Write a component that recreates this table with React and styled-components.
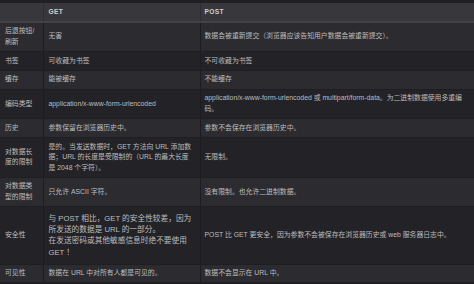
import styled, { createGlobalStyle } from "styled-components";

const GlobalStyle = createGlobalStyle`
  html, body {
    margin: 0;
    padding: 0;
    background: #202024;
  }
  body {
    font-family: "Liberation Sans", "Noto Sans CJK SC", sans-serif;
  }
`;

const Page = styled.div`
  padding-top: 3px;
  width: 474px;
  height: 284px;
  overflow: hidden;
`;

const Table = styled.table`
  width: 474px;
  border-collapse: collapse;
  table-layout: fixed;
  font-size: 6.85px;
  line-height: 10.5px;
  color: #bcbcbe;
`;

const HeadRow = styled.tr`
  background: #38383c;
  border-bottom: 2px solid #434347;
`;

const HeadCell = styled.th`
  text-align: left;
  font-weight: bold;
  font-size: 6.6px;
  letter-spacing: 0.4px;
  color: #cfcfd1;
  padding: 4px 5px 3px;
  border-right: 1px solid #2e2e32;
  &:last-child {
    border-right: none;
    padding-left: 4px;
  }
`;

const Row = styled.tr`
  background: ${(p) => (p.$odd ? "#2c2c30" : "#232327")};
  border-bottom: 1px solid #1f1f23;
`;

const Cell = styled.td`
  vertical-align: middle;
  padding: ${(p) => (p.$tall ? "5.6px" : "3.7px")} 5px;
  font-size: ${(p) => (p.$big ? "7.7px" : "inherit")};
  line-height: ${(p) => (p.$big ? "11.3px" : "inherit")};
  border-right: 1px solid #1d1d21;
  word-break: break-all;
  &:last-child {
    border-right: none;
    padding-left: 4px;
  }
`;

const rows = [
  ["后退按钮/刷新", "无害", "数据会被重新提交（浏览器应该告知用户数据会被重新提交）。"],
  ["书签", "可收藏为书签", "不可收藏为书签"],
  ["缓存", "能被缓存", "不能缓存"],
  [
    "编码类型",
    "application/x-www-form-urlencoded",
    "application/x-www-form-urlencoded 或 multipart/form-data。为二进制数据使用多重编码。",
  ],
  ["历史", "参数保留在浏览器历史中。", "参数不会保存在浏览器历史中。"],
  [
    "对数据长度的限制",
    "是的。当发送数据时，GET 方法向 URL 添加数据；URL 的长度是受限制的（URL 的最大长度是 2048 个字符）。",
    "无限制。",
  ],
  ["对数据类型的限制", "只允许 ASCII 字符。", "没有限制。也允许二进制数据。"],
  [
    "安全性",
    <>
      与 POST 相比，GET 的安全性较差，因为所发送的数据是 URL 的一部分。
      <br />
      在发送密码或其他敏感信息时绝不要使用 GET ！
    </>,
    "POST 比 GET 更安全，因为参数不会被保存在浏览器历史或 web 服务器日志中。",
    true,
  ],
  ["可见性", "数据在 URL 中对所有人都是可见的。", "数据不会显示在 URL 中。"],
];

export default function App() {
  return (
    <Page>
      <GlobalStyle />
      <Table>
        <colgroup>
          <col style={{ width: 43 }} />
          <col style={{ width: 157 }} />
          <col />
        </colgroup>
        <thead>
          <HeadRow>
            <HeadCell />
            <HeadCell>GET</HeadCell>
            <HeadCell>POST</HeadCell>
          </HeadRow>
        </thead>
        <tbody>
          {rows.map(([label, get, post, tall], i) => (
            <Row key={i} $odd={i % 2 === 0}>
              <Cell $tall={tall}>{label}</Cell>
              <Cell $tall={tall} $big={tall}>
                {get}
              </Cell>
              <Cell $tall={tall}>{post}</Cell>
            </Row>
          ))}
        </tbody>
      </Table>
    </Page>
  );
}
